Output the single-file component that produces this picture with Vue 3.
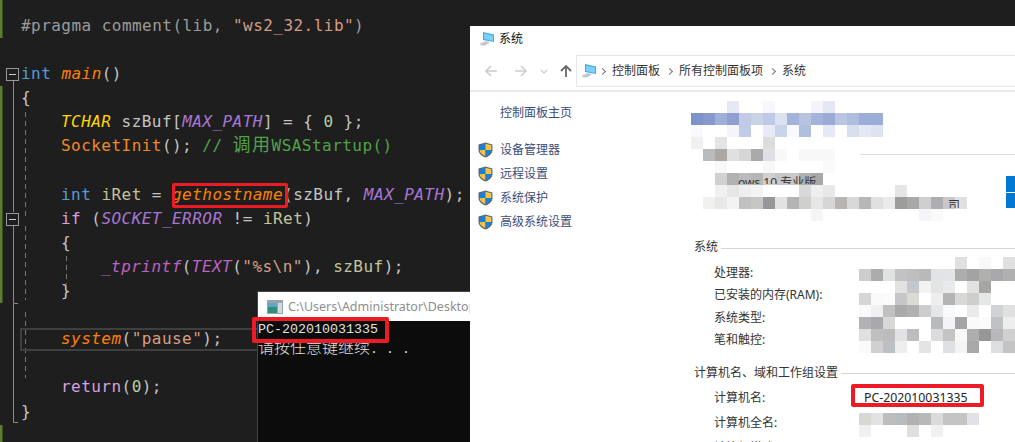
<script setup>
const top = [
  [0,0,0,'#e6e9f4',0,0,'#f8f8fc',0,0,0,'#f4f4fa','#e4e6f3'],
  ['#7e93c8','#8599cc','#9eafd8','#8e9fd0','#c0cbe5','#c8d3e8','#bfc8e4','#dbe1ef','#a4b3da','#b8c3e0','#a3b3dc','#9aabd6','#bac5e2','#aebdde','#9dadd9','#9cadd8'],
  ['#fafafe',0,0,'#f4f5fb','#c0cce6',0,'#e8eaf6','#c8d4ea','#f8f9fe','#aebfe0',0,'#e6e9f5',0,'#d5dfef','#e4e8f4','#dde3f0'],
  ['#f0f0ee',0,'#e4e4e4',0,0,0,'#dcdcdc'],
  [0,'#bbbbbb','#aaa7a5','#e0e0e0','#d6d6d6','#aaaaaa','#dfe0e6','#f8f8f8',0,'#f8f8f8','#f8f8f8','#f8f8f8'],
  [0,0,'#f8f9f9',0,0,0,'#f8f8f8',0,0,0,0,'#fafafa'],
  [0,0,'#d0d1d1','#b1b1b1','#bbbbbb','#b5b5b5','#d0d0d0','#c5c5c5','#c8c8c8','#b0b0b0','#a8a8a8'],
  [0,0,'#f0f0f0','#e6e6e4','#eeeeee','#f4f4f4',0,0,0,'#d8d8d8','#eeeeee','#e8e8e8',0,0,0,0,0,'#e6e6e6'],
  [0,'#f0f0ee','#e8e8e8','#f2f4f3','#c0c0c0','#c6c6c4','#979799','#e2e2e2','#b4b4b4','#cfcfcd','#e6e6e6','#d6d6d6','#b6b5b2','#d8d8d8','#b6b8b6','#e0e0e0','#ebebeb','#9d9d9b','#a9a8a6','#cfcfd0','#aeaeb0','#c8c8c8','#e0e0e0'],
  [0,0,0,0,0,0,0,0,0,0,'#f4f6f6',0,0,0,0,0,0,0,0,'#f4f5f8','#fafafa'],
]
const mid = [
  [0,0,0,0,0,0,0,0,'#dfe1e1',0,'#f8f8f8',0,'#e0e0e0'],
  ['#cdcdcb','#acacac','#e0e2e2','#c2c2c4','#bfbfbf','#b9b9b9','#e2e3e5','#e3e4e8','#adadad','#a3a3a3','#b0b0ae','#a9a9ad','#b0b0b0'],
  [0,0,0,'#e2e2e2','#c4c8cc','#f2f2f2','#e2e4e4','#e8e9eb',0,'#e2e2e0','#a6a6a4'],
  ['#d6d6d6','#fafafa','#fbfbfb','#c6c6c6','#dcdad6',0,'#eeeeee','#b4b4b4','#d8d8d6','#cececc','#e6e8e8'],
  ['#fafafa','#eef0f2','#c0c0c0','#aaaaaa','#b0b0b0','#cdcdcd','#e4e6ea','#f8fafc',0,'#e8eaec',0,'#d0d2d6','#e0e0e0'],
  ['#b2b2b4','#a8a9ab','#d8d8d6',0,0,0,'#b8babc','#f4f4f6','#a4a4a4','#fafafa','#fbfbfb','#bfc1c4','#eeeeee'],
  ['#e0e0e2','#c0bfc0','#bcbcbc','#e2e2e4','#bcbebe',0,'#dcdcdc','#c4c4c4','#f8f8f8','#aeaeae','#979797','#b8b8ba','#d0d0d0'],
  ['#fafafa','#d0d0d2','#bcc0c4','#eeeeee',0,'#e4e4e2',0,'#dfe0e4','#f4f4f4','#a8a8a6',0,'#dcdee0','#c4c4c4'],
]
const low = [
  ['#d8d8d4','#e2e2e2','#bdbdbd','#b8bcc0','#b2b2b2','#b8b8b8','#dadada','#c4c4c4','#c4c4c4','#e2e2e6'],
  ['#f0f0ee',0,0,0,'#dfdfdf',0,'#f0f0f0'],
]
const mosaics = [
  { x: 691, y: 101, rows: top },
  { x: 859, y: 257, rows: mid },
  { x: 859, y: 413, rows: low },
]
const sideLinks = ['设备管理器', '远程设置', '系统保护', '高级系统设置']
const specs = ['处理器:', '已安装的内存(RAM):', '系统类型:', '笔和触控:']
</script>

<template>
  <div class="desk">
    <div class="code">
      <div class="ln"><span class="pp">#pragma comment(lib, </span><span class="str">"ws2_32.lib"</span><span class="pp">)</span></div>
      <div class="ln"></div>
      <div class="ln"><span class="kw">int</span> <span class="fn">main</span>()</div>
      <div class="ln">{</div>
      <div class="ln i1"><span class="ty">TCHAR</span> szBuf[<span class="mc">MAX_PATH</span>] = { <span class="num">0</span> };</div>
      <div class="ln i1"><span class="fu">SocketInit</span>(); <span class="cm">// <span class="cjk">调用</span>WSAStartup()</span></div>
      <div class="ln"></div>
      <div class="ln i1"><span class="kw">int</span> <span class="var">iRet</span> = <span class="fn">gethostname</span>(szBuf, <span class="mc">MAX_PATH</span>);</div>
      <div class="ln i1"><span class="ret">if</span> (<span class="mc">SOCKET_ERROR</span> != <span class="var">iRet</span>)</div>
      <div class="ln i1">{</div>
      <div class="ln i2"><span class="mc2">_tprintf</span>(<span class="mc2">TEXT</span>(<span class="str">"%s\n"</span>), <span class="var">szBuf</span>);</div>
      <div class="ln i1">}</div>
      <div class="ln"></div>
      <div class="ln i1"><span class="fn">system</span>(<span class="str">"pause"</span>);</div>
      <div class="ln"></div>
      <div class="ln i1"><span class="ret">return</span>(<span class="num">0</span>);</div>
      <div class="ln">}</div>
    </div>

    <svg class="gutter" width="80" height="442" viewBox="0 0 80 442" fill="none">
      <path d="M1 0V38M1 86V303M1 425V442" stroke="#5b7d2f" stroke-width="3"/>
      <path d="M13.5 81V212M13.5 226V303.5H18M13.5 304V422.5H18" stroke="#8a8a8a"/>
      <path d="M25.5 112V218M25.5 226V300M25.5 312V378" stroke="#777" stroke-dasharray="5 4"/>
      <path d="M66.5 256V284" stroke="#777" stroke-dasharray="5 4"/>
      <rect x="6.5" y="68.5" width="12" height="12" stroke="#999"/>
      <path d="M9 74.5H16" stroke="#ccc"/>
      <rect x="6.5" y="213.5" width="12" height="12" stroke="#999"/>
      <path d="M9 219.5H16" stroke="#ccc"/>
    </svg>
    <div class="current"></div>

    <section class="console">
      <header class="con-title">
        <svg width="16" height="14" viewBox="0 0 16 14">
          <rect width="16" height="14" fill="#9aa4ac"/>
          <rect x="1" y="3" width="9" height="10" fill="#2f8f7a"/>
          <rect x="1" y="3" width="9" height="4" fill="#5fa7c4"/>
          <rect x="11" y="3" width="4" height="10" fill="#d5d9dc"/>
        </svg>
        <span>C:\Users\Administrator\Desktop</span>
      </header>
      <div class="con-body">
        <div>PC-202010031335</div>
        <div class="con-cn">请按任意键继续<span class="dots">. . .</span></div>
      </div>
    </section>

    <section class="win">
      <header class="win-title">
        <svg width="16" height="16" viewBox="0 0 16 16">
          <path d="M4 1 15 3.5V11L4 9Z" fill="#3fa9ec"/>
          <path d="M5 2.5 14 4.5V10L5 8Z" fill="#7fd0f7"/>
          <path d="M1 12.5 7 10l4 1.5-5 3H2Z" fill="#c3c7cb"/>
        </svg>
        <span>系统</span>
      </header>
      <nav class="nav">
        <svg class="navicons" width="92" height="16" viewBox="0 0 92 16" fill="none">
          <path d="M2 8H13M7 3 2 8l5 5" stroke="#cdcdcd" stroke-width="1.6"/>
          <path d="M31 8H42M37 3l5 5-5 5" stroke="#cdcdcd" stroke-width="1.6"/>
          <path d="M57 7l3 3 3-3" stroke="#cdcdcd" stroke-width="1.3"/>
          <path d="M82 14V3M77 8l5-5 5 5" stroke="#6b6b6b" stroke-width="1.8"/>
        </svg>
        <div class="crumbs">
          <svg width="16" height="16" viewBox="0 0 16 16">
            <path d="M4 1 15 3.5V11L4 9Z" fill="#3fa9ec"/>
            <path d="M5 2.5 14 4.5V10L5 8Z" fill="#7fd0f7"/>
            <path d="M1 12.5 7 10l4 1.5-5 3H2Z" fill="#c3c7cb"/>
          </svg>
          <i class="chev"></i><span>控制面板</span>
          <i class="chev"></i><span>所有控制面板项</span>
          <i class="chev"></i><span>系统</span>
        </div>
      </nav>
      <div class="content">
        <aside class="side">
          <a class="home">控制面板主页</a>
          <a v-for="s in sideLinks" :key="s" class="link">
            <svg width="15" height="16" viewBox="0 0 15 16">
              <path d="M7.5 .5 14.5 2.5V8c0 3.6-3 6-7 7.5C3.5 14 .5 11.6 .5 8V2.5Z" fill="#5d6a78"/>
              <path d="M7.5 1.8V8H1.7V3.3Z" fill="#1c7fd6"/>
              <path d="M7.5 1.8 13.3 3.3V8H7.5Z" fill="#f7c53f"/>
              <path d="M1.7 8H7.5V14C4.2 12.7 1.7 10.8 1.7 8Z" fill="#f7c53f"/>
              <path d="M7.5 8H13.3C13.3 10.8 10.8 12.7 7.5 14Z" fill="#1c7fd6"/>
            </svg>
            <span>{{ s }}</span>
          </a>
        </aside>
        <main class="main">
          <div class="rule first"></div>
          <div class="head sys"><span>系统</span><i></i></div>
          <dl class="specs">
            <dt v-for="s in specs" :key="s">{{ s }}</dt>
          </dl>
          <div class="head net"><span>计算机名、域和工作组设置</span><i></i></div>
          <div class="pair"><span>计算机名:</span><b>PC-202010031335</b></div>
          <div class="pair"><span>计算机全名:</span></div>
          <div class="pair"><span>计算机描述:</span></div>
        </main>
      </div>
    </section>

    <div
      v-for="(m, i) in mosaics"
      :key="i"
      class="mosaic"
      :style="{ left: m.x + 'px', top: m.y + 'px' }"
    >
      <div v-for="(row, r) in m.rows" :key="r" class="mrow">
        <i v-for="(c, k) in row" :key="k" :style="{ background: c || 'transparent' }"></i>
      </div>
    </div>
    <span class="peek p1">ows 10 专业版</span>
    <span class="peek p2">司</span>
    <div class="logo"><i></i><i></i></div>

    <div class="mark m1"></div>
    <div class="mark m2"></div>
    <div class="mark m3"></div>
  </div>
</template>

<style>
html, body { margin: 0; background: #1e1e1e; }
</style>

<style scoped>
.desk {
  position: relative;
  width: 1015px;
  height: 442px;
  overflow: hidden;
  background: #1e1e1e;
}
.code {
  box-sizing: border-box;
  height: 442px;
  padding: 14px 0 0 21px;
  font: 16px/24.1px "DejaVu Sans Mono", monospace;
  letter-spacing: .46px;
  color: #c4c4c4;
}
.ln { height: 24.1px; white-space: pre; }
.i1 { padding-left: 40px; }
.i2 { padding-left: 80px; }
.pp { color: #9b9b9b; }
.str { color: #d69d85; }
.kw { color: #569cd6; }
.fn { color: #ff8000; font-style: italic; }
.fu { color: #f28a2c; }
.ty { color: #ffd700; font-style: italic; }
.mc { color: #a877d6; font-style: italic; }
.mc2 { color: #bd63c5; font-style: italic; }
.num { color: #b5cea8; }
.cm { color: #4fa34a; }
.cjk { font-family: "Noto Sans CJK SC", sans-serif; font-size: 18px; letter-spacing: 1.5px; line-height: 1; }
.var { color: #c4c49c; }
.ret { color: #d8a0df; }

.gutter { position: absolute; left: 0; top: 0; }
.current {
  position: absolute;
  left: 20px;
  top: 328px;
  width: 240px;
  height: 19px;
  border: 2px solid #3f3f3f;
}

.console {
  position: absolute;
  left: 257px;
  top: 291px;
  width: 213px;
  height: 151px;
  border-left: 1px solid #444;
  border-top: 1px solid #444;
  background: #0c0c0c;
}
.con-title {
  height: 29px;
  padding-left: 9px;
  background: #fff;
  display: flex;
  align-items: center;
  gap: 5px;
  overflow: hidden;
  white-space: nowrap;
  font: 12.5px "Noto Sans", sans-serif;
  color: #8e8e8e;
}
.con-title svg { flex: none; }
.con-body {
  font: 13.33px/18px "Liberation Mono", monospace;
  color: #e0e0e0;
}
.con-cn {
  margin-top: -2px;
  font-family: "Noto Sans CJK SC", sans-serif;
  font-size: 16px;
  font-weight: 300;
  white-space: nowrap;
}
.dots { font: 13.33px "Liberation Mono", monospace; letter-spacing: 0; }

.win {
  position: absolute;
  left: 470px;
  top: 26px;
  width: 545px;
  height: 416px;
  background: #fff;
  font: 12px/16px "Noto Sans", "Noto Sans CJK SC", sans-serif;
  color: #333;
}
.win-title {
  box-sizing: border-box;
  height: 29px;
  padding: 0 0 4px 9px;
  display: flex;
  align-items: center;
  gap: 4px;
  color: #111;
}
.nav {
  box-sizing: border-box;
  height: 37px;
  display: flex;
  align-items: flex-start;
  padding-left: 14px;
  border-bottom: 2px solid #e8e8e8;
}
.navicons { margin-top: 8px; flex: none; }
.crumbs {
  box-sizing: border-box;
  flex: 1;
  height: 32px;
  border: 1px solid #e6e6e6;
  border-right: 0;
  display: flex;
  align-items: center;
  padding-left: 4px;
  font-size: 12px;
  color: #333;
}
.crumbs svg { margin-right: -4px; }
.chev {
  width: 4px;
  height: 4px;
  margin: 0 7.5px 0 6.5px;
  border-top: 1.5px solid #777;
  border-right: 1.5px solid #777;
  transform: rotate(45deg);
}
.content { display: flex; }
.side {
  width: 224px;
  flex: none;
  padding: 13px 0 0 8px;
  box-sizing: border-box;
  color: #3c4c78;
}
.home { display: block; margin: 0 0 12px 22px; height: 21px; line-height: 16px; }
.link { display: flex; align-items: center; gap: 7px; height: 24px; }
.main { flex: 1; min-width: 0; }
.rule.first {
  height: 1px;
  margin: 62px 0 0 166px;
  background: #dcdcdc;
}
.head { display: flex; align-items: center; gap: 3px; }
.head i { flex: 1; height: 1px; background: #d6d6d6; margin-top: 2px; }
.sys { margin-top: 84px; }
.specs { margin: 7px 0 0 20px; }
.specs dt { height: 22.4px; line-height: 22.4px; }
.net { margin-top: 13px; }
.pair {
  display: flex;
  height: 25px;
  align-items: center;
  padding-left: 20px;
}
.net + .pair { margin-top: 5px; }
.pair span { width: 150px; }
.pair b { font-weight: 400; color: #222; font-size: 12.3px; }

.mosaic { position: absolute; }
.mrow { display: flex; height: 12px; }
.mrow i { flex: none; width: 12px; height: 12px; }
.peek {
  position: absolute;
  overflow: hidden;
  font: 12px/16px "Noto Sans", "Noto Sans CJK SC", sans-serif;
  color: #333;
  white-space: nowrap;
}
.p1 { left: 738px; top: 175px; height: 9px; }
.p2 { left: 948px; top: 198px; height: 10px; }
.logo {
  position: absolute;
  left: 1006px;
  top: 176px;
  width: 9px;
  height: 32px;
  display: flex;
  flex-direction: column;
  gap: 1px;
}
.logo i { flex: 1; background: #0078d4; }

.mark {
  position: absolute;
  box-sizing: border-box;
  border: 4px solid #ed1c24;
  border-radius: 2px;
}
.m1 { left: 172px; top: 183px; width: 116px; height: 25px; border-width: 3px; }
.m2 { left: 252px; top: 317px; width: 137px; height: 26px; }
.m3 { left: 851px; top: 384px; width: 133px; height: 23px; }
</style>
